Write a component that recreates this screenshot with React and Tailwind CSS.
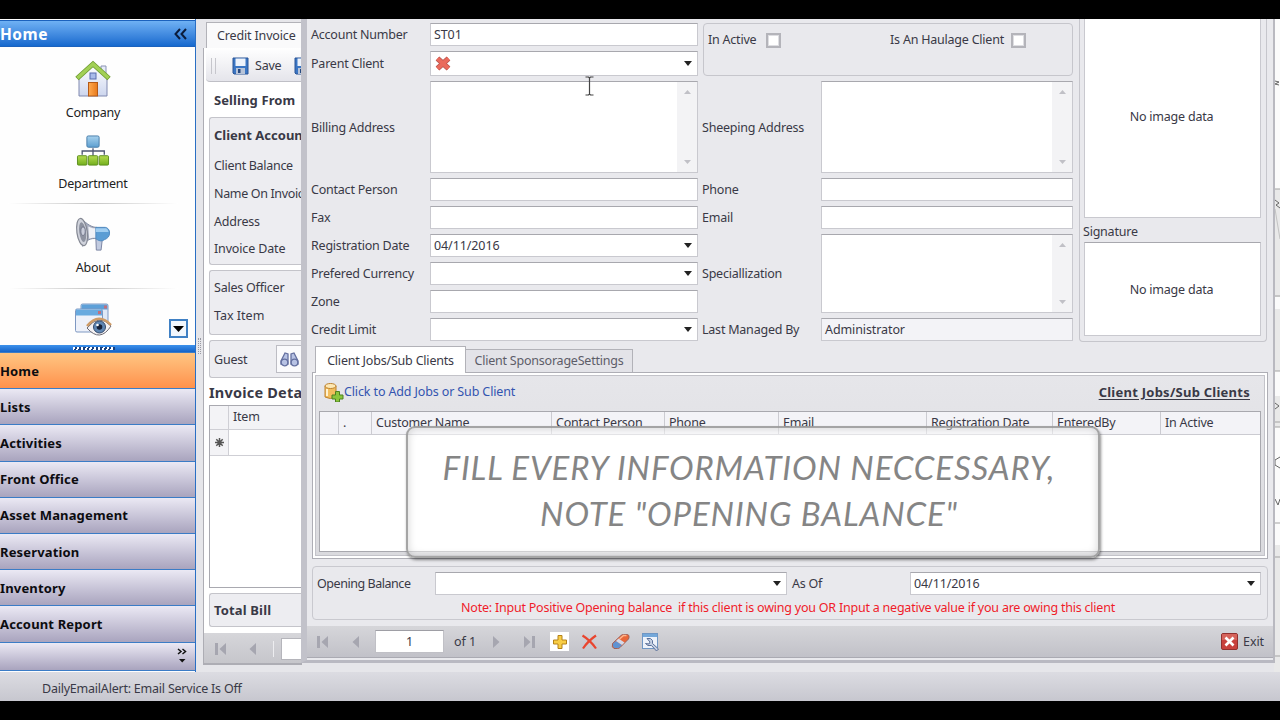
import clsx from 'clsx';

const shortcuts = ['Company', 'Department', 'About'];
const groups = ['Home', 'Lists', 'Activities', 'Front Office', 'Asset Management', 'Reservation', 'Inventory', 'Account Report'];

const columns = [
  { label: '', width: 'w-[19px]' },
  { label: '.', width: 'w-[33px]' },
  { label: 'Customer Name', width: 'w-[180px]' },
  { label: 'Contact Person', width: 'w-[113px]' },
  { label: 'Phone', width: 'w-[114px]' },
  { label: 'Email', width: 'w-[148px]' },
  { label: 'Registration Date', width: 'w-[126px]' },
  { label: 'EnteredBy', width: 'w-[108px]' },
  { label: 'In Active', width: 'flex-1' },
];

function HouseIcon() {
  return (
    <svg width="38" height="38" viewBox="0 0 38 38">
      <defs>
        <linearGradient id="door" x1="0" y1="0" x2="1" y2="0">
          <stop offset="0" stopColor="#ffab52" />
          <stop offset="1" stopColor="#e87a1c" />
        </linearGradient>
        <linearGradient id="wall" x1="0" y1="0" x2="0" y2="1">
          <stop offset="0" stopColor="#ffffff" />
          <stop offset="1" stopColor="#cdd6ee" />
        </linearGradient>
      </defs>
      <path d="M27 6h5v11l-5-4z" fill="#e6ebf8" stroke="#8a93b4" />
      <path d="M5 18 19 5l14 13v18H5z" fill="url(#wall)" stroke="#8089b0" />
      <rect x="14.500" y="22.500" width="9" height="13.500" fill="url(#door)" stroke="#b35a18" />
      <rect x="16" y="13" width="6" height="6" fill="#a9bbea" stroke="#5a6cae" />
      <path d="M3 18.500 19 4l16 14.500" fill="none" stroke="#6f9c33" strokeWidth="5" />
      <path d="M3.500 18 19 4l15.500 14" fill="none" stroke="#a2d055" strokeWidth="3.300" />
    </svg>
  );
}

function OrgIcon() {
  return (
    <svg width="36" height="34" viewBox="0 0 36 34">
      <defs>
        <linearGradient id="blueBox" x1="0" y1="0" x2="0" y2="1">
          <stop offset="0" stopColor="#a8d2ee" />
          <stop offset="1" stopColor="#5d9fd0" />
        </linearGradient>
        <linearGradient id="greenBox" x1="0" y1="0" x2="0" y2="1">
          <stop offset="0" stopColor="#b5dc50" />
          <stop offset="1" stopColor="#72ae1c" />
        </linearGradient>
      </defs>
      <path d="M18 14v8M6.500 21v-4h23.500v4" fill="none" stroke="#4d5572" strokeWidth="1.400" />
      <rect x="11.500" y="1" width="13" height="12" rx="1.500" fill="url(#blueBox)" stroke="#447ba8" />
      <rect x="1.500" y="22" width="10" height="10" rx="1" fill="url(#greenBox)" stroke="#5a8c1c" />
      <rect x="13" y="22" width="10" height="10" rx="1" fill="url(#greenBox)" stroke="#5a8c1c" />
      <rect x="24.500" y="22" width="10" height="10" rx="1" fill="url(#greenBox)" stroke="#5a8c1c" />
    </svg>
  );
}

function MegaphoneIcon() {
  return (
    <svg width="38" height="38" viewBox="0 0 38 38">
      <path d="M22 23h7l-1.500 13h-5z" fill="#c2cbe0" stroke="#7680a0" />
      <path d="M7 3c6 6 11 9 16 9v12c-6-1-11 1-15 8z" fill="#a9afc0" stroke="#8088a0" />
      <path d="M14 11c4 2 6 2 9 2v10c-3 0-6 0-8 1z" fill="#eff1f6" />
      <path d="M22 12h10q4.500 1 4.500 6T31 25q-4 3-9-1z" fill="#5b9dd4" stroke="#5289bd" />
      <path d="M22 13h11q2 1 2.500 4H22z" fill="#a0cdf0" />
      <ellipse cx="7.500" cy="17" rx="5.500" ry="14.500" fill="#d0d3dc" stroke="#858994" strokeWidth="1.300" transform="rotate(-8 7.500 17)" />
      <ellipse cx="8" cy="17" rx="3.500" ry="10.500" fill="#8d92a0" transform="rotate(-8 8 17)" />
      <ellipse cx="8.500" cy="16" rx="2.300" ry="4.500" fill="#c9cdda" stroke="#70758a" />
    </svg>
  );
}

function WindowEyeIcon() {
  return (
    <svg width="38" height="34" viewBox="0 0 38 34">
      <rect x="7" y="1" width="27" height="24" rx="1.500" fill="#dfe8f6" stroke="#7e98c2" />
      <path d="M7.500 1.500h26v5h-26z" fill="#5da0d8" />
      <rect x="1.500" y="6" width="27" height="23" rx="1.500" fill="#edf1fa" stroke="#7e98c2" />
      <path d="M2 6.500h26v6H2z" fill="#68aadf" />
      <path d="M30 2.500h3v3h-3zM24 8h3v3h-3z" fill="#c2707c" />
      <path d="M13 25q12-15 24-2-11 17-24 2z" fill="#f4f2f4" stroke="#6b6871" />
      <path d="M13 23q12-14 24-1" fill="none" stroke="#cf9c67" strokeWidth="2.500" />
      <circle cx="25.500" cy="24" r="6" fill="#5f86b2" stroke="#33496b" />
      <circle cx="25.500" cy="24" r="2.800" fill="#152038" />
      <circle cx="23.500" cy="22" r="1.300" fill="#fff" />
    </svg>
  );
}

const shortcutIcons = { Company: HouseIcon, Department: OrgIcon, About: MegaphoneIcon };

function SaveIcon() {
  return (
    <svg width="17" height="18" viewBox="0 0 17 18" className="shrink-0">
      <path d="M1 1h15v16H2l-1-1z" fill="#3b76c4" stroke="#2a5596" />
      <rect x="3.500" y="1.500" width="10" height="7.500" fill="#eef3fb" />
      <rect x="4" y="11" width="9" height="6" fill="#b8c4d8" />
      <rect x="6" y="12" width="2.500" height="4" fill="#27497f" />
    </svg>
  );
}

function Caret() {
  return (
    <svg width="8" height="5" viewBox="0 0 8 5" className="shrink-0">
      <path d="M0 0h8L4 5z" fill="#222" />
    </svg>
  );
}

function NavArrow({ bar, flip }) {
  return (
    <svg width="14" height="14" viewBox="0 0 14 14" className={clsx('shrink-0 text-[#a6a6b0]', flip && 'rotate-180')}>
      {bar && <path d="M1 1h3v12H1z" fill="currentColor" />}
      <path d="M12 1v12L5.500 7z" fill="currentColor" />
    </svg>
  );
}

function Field({ value, caret, readOnly, children, className = 'h-[23px]' }) {
  return (
    <div
      className={clsx(
        'flex flex-1 items-center justify-between border border-[#c9c9cf] border-t-[#a8a8ae] pr-[5px] pl-[3px]',
        readOnly ? 'bg-[#f3f3f7]' : 'bg-white',
        className,
      )}
    >
      <span className="pt-px tracking-[-0.1px] whitespace-pre">{value}</span>
      {children}
      {caret && <Caret />}
    </div>
  );
}

function Memo({ className }) {
  return (
    <div className={clsx('flex flex-1 justify-end border border-[#c9c9cf] border-t-[#a8a8ae] bg-white', className)}>
      <div className="flex w-5 flex-col items-center justify-between bg-[#f3f3f5] py-2">
        <svg width="7" height="4" viewBox="0 0 7 4"><path d="M0 4h7L3.500 0z" fill="#c0c0c6" /></svg>
        <svg width="7" height="4" viewBox="0 0 7 4"><path d="M0 0h7L3.500 4z" fill="#c0c0c6" /></svg>
      </div>
    </div>
  );
}

function Row({ label, children }) {
  return (
    <div className="flex items-center">
      <div className="w-[119px] shrink-0 pt-px whitespace-nowrap">{label}</div>
      {children}
    </div>
  );
}

function Check({ label, className }) {
  return (
    <div className={clsx('flex items-center whitespace-nowrap', className)}>
      {label}
      <span className="h-[15px] w-[15px] border-2 border-[#b4b4ba] bg-white shadow-[inset_0_0_0_1px_#dedee2]" />
    </div>
  );
}

function Sidebar() {
  return (
    <aside className="flex w-[196px] shrink-0 flex-col border-r border-[#2a6fc4] bg-[#fefefe] pt-px">
      <div className="flex h-[27px] items-center justify-between border-y border-[#1c62bd] bg-gradient-to-b from-[#6fb1f4] to-[#1569ce] pr-2 text-[15.5px] font-bold tracking-[0.5px] text-white">
        <span>Home</span>
        <svg width="13" height="12" viewBox="0 0 13 12" fill="none" stroke="#0b1c3c" strokeWidth="2">
          <path d="M6 1 1.500 6 6 11M12 1 7.500 6 12 11" />
        </svg>
      </div>

      <div className="flex h-[298px] flex-col items-center overflow-hidden pr-[9px] text-[#222]">
        {shortcuts.map((name) => {
          const Icon = shortcutIcons[name];
          return (
            <div
              key={name}
              className={clsx(
                'flex w-full flex-col items-center',
                name === 'Company' && 'h-[86px] gap-[6px] pt-[13px]',
                name === 'Department' && 'h-[71px] gap-[8px] pt-[2px]',
                name === 'About' && 'h-[85px] gap-[7px] pt-[12px]',
              )}
            >
              <Icon />
              <span className="leading-[18px]">{name}</span>
              {name === 'Department' && <div className="mt-[2px] h-px w-[170px] shrink-0 bg-gradient-to-r from-white via-[#c6c6c6] to-white" />}
              {name === 'About' && <div className="mt-[4px] h-px w-[170px] shrink-0 bg-gradient-to-r from-white via-[#c6c6c6] to-white" />}
            </div>
          );
        })}
        <div className="flex w-full justify-end pt-[14px]">
          <WindowEyeIcon />
          <div className="mt-[16px] -mr-[2px] ml-[57px] flex h-[19px] w-[19px] items-center justify-center border-2 border-[#3f80c4] bg-[#f2f7fd]">
            <svg width="11" height="6" viewBox="0 0 11 6"><path d="M0 0h11L5.500 6z" fill="#000" /></svg>
          </div>
        </div>
      </div>

      <div className="flex h-[7px] shrink-0 items-center justify-center bg-gradient-to-b from-[#3d92ec] to-[#1463c8] pr-[8px]">
        <div className="h-[3px] w-[42px] bg-[repeating-linear-gradient(110deg,#fff_0_2px,#173f7d_2px_4px)]" />
      </div>

      <nav>
        {groups.map((name) => (
          <div
            key={name}
            className={clsx(
              'flex h-[36.2px] items-center border-t border-[#3b7cc6] bg-gradient-to-b text-[13px] font-bold tracking-[0.15px] text-[#0c0c10]',
              name === 'Home' ? 'from-[#ffc582] to-[#ff914b]' : 'from-[#ebe9f4] to-[#a9a4be]',
            )}
          >
            {name}
          </div>
        ))}
      </nav>
      <div className="flex h-[29.4px] justify-end border-y border-[#3b7cc6] bg-gradient-to-b from-[#ebe9f4] to-[#a9a4be] pt-[5px] pr-2">
        <svg width="10" height="15" viewBox="0 0 10 15" fill="none" stroke="#111" strokeWidth="1.500">
          <path d="m1 1 3 2.500L1 6M5.500 1l3 2.500-3 2.500" />
          <path d="M2 11h6.500L5.200 14.500z" fill="#111" stroke="none" />
        </svg>
      </div>
    </aside>
  );
}

function Group({ className, children }) {
  return <div className={clsx('ml-[5px] rounded-l-[3px] border border-r-0 border-[#c4c4ca] bg-[#ededf1] pl-[4px]', className)}>{children}</div>;
}

function InvoiceWindow() {
  return (
    <section className="flex w-[99px] shrink-0 flex-col overflow-hidden whitespace-nowrap">
      <div className="mt-[3px] ml-[3px] flex h-[26px] items-center border border-[#b2b2b8] border-b-0 bg-[#fafafb] pl-[10px] tracking-[-0.15px]">Credit Invoice</div>
      <div className="flex h-[617px] flex-col border-b-2 border-l border-[#adadb4] bg-white">
        <div className="ml-[2px] flex h-[34px] shrink-0 items-center gap-[6px] rounded-l-sm border-b border-[#bfbfc6] bg-gradient-to-b from-white to-[#e5e5eb] pt-[2px] pl-[5px]">
          <div className="mr-[10px] h-4 w-[5px] shrink-0 border-x border-[#c6c6cc]" />
          <SaveIcon />
          <span>Save</span>
          <div className="ml-[7px]"><SaveIcon /></div>
        </div>
        <div className="flex h-[35px] shrink-0 items-center pt-px pl-[10px] text-[13px] font-bold tracking-[0.1px]">Selling From</div>
        <Group className="flex h-[148px] shrink-0 flex-col">
          <div className="mt-[7px] h-[25px] text-[13px] font-bold tracking-[0px]">Client Accoun</div>
          <div className="mt-[6px] h-[28px] tracking-[-0.3px]">Client Balance</div>
          <div className="h-[28px] tracking-[-0.35px]">Name On Invoic</div>
          <div className="h-[27px]">Address</div>
          <div className="tracking-[-0.15px]">Invoice Date</div>
        </Group>
        <Group className="mt-[5px] h-[65px] shrink-0 pt-[7px]">
          <div className="h-[28px]">Sales Officer</div>
          <div className="tracking-[0px]">Tax Item</div>
        </Group>
        <Group className="mt-[5px] flex h-[38px] shrink-0 items-center">
          <span className="w-[62px] shrink-0 pt-px">Guest</span>
          <div className="flex h-7 w-7 shrink-0 items-center border border-[#bdbdc4] bg-[#fafafc] pl-[3px]">
            <svg width="19" height="15" viewBox="0 0 19 15" fill="#b7c2e4" stroke="#6470a0" strokeWidth="1.300">
              <path d="M5 1 1 9v3h7V2zM14 1l4 8v3h-7V2z" />
              <circle cx="4.500" cy="10.500" r="3.300" />
              <circle cx="14.500" cy="10.500" r="3.300" />
            </svg>
          </div>
        </Group>
        <div className="ml-[5px] flex h-[27px] shrink-0 items-center text-[14.5px] font-bold tracking-[0.2px]">Invoice Deta</div>
        <div className="ml-[5px] h-[183px] shrink-0 border border-r-0 border-[#a9a9b0] bg-white">
          <div className="flex h-[24px] border-b border-[#cfcfd5] bg-[#f3f3f6]">
            <div className="w-[19px] border-r border-[#cfcfd5]" />
            <div className="pt-px pl-[4px]">Item</div>
          </div>
          <div className="flex h-[26px] border-b border-[#cfcfd5]">
            <div className="flex w-[19px] items-center justify-center border-r border-[#cfcfd5] bg-[#f3f3f6]">
              <svg width="9" height="9" viewBox="0 0 9 9" stroke="#555" strokeWidth="1.500"><path d="M4.500 0v9M0 4.500h9M1.300 1.300l6.400 6.400M7.700 1.300 1.300 7.700" /></svg>
            </div>
          </div>
        </div>
        <Group className="mt-[5px] flex h-[34px] shrink-0 items-center text-[13px] font-bold tracking-[0.15px]">Total Bill</Group>
        <div className="mt-[6px] flex flex-1 items-center bg-gradient-to-b from-[#d6d6da] to-[#c6c6cb] pt-[2px] pl-[10px]">
          <NavArrow bar />
          <div className="ml-[16px]"><NavArrow /></div>
          <div className="ml-[15px] h-4 w-px bg-[#ededf0]" />
          <div className="ml-[7px] h-[22px] flex-1 border border-r-0 border-[#b5b5bb] bg-white" />
        </div>
      </div>
    </section>
  );
}

function ClientForm() {
  return (
    <div className="flex h-[323px] shrink-0 pt-[4px] pl-[4px]">
      <div className="flex w-[387px] flex-col gap-[5px]">
        <Row label="Account Number"><Field value="ST01" /></Row>
        <Row label="Parent Client">
          <Field caret className="h-[25px]">
            <svg width="16" height="15" viewBox="0 0 16 15" className="mr-auto ml-px">
              <path d="M2.500 2.500 13.500 12.500M13.500 2.500 2.500 12.500" stroke="#b5544e" strokeWidth="5.500" />
              <path d="M2.500 2.500 13.500 12.500M13.500 2.500 2.500 12.500" stroke="#ea6a5c" strokeWidth="4" />
            </svg>
          </Field>
        </Row>
        <Row label="Billing Address"><Memo className="h-[92px]" /></Row>
        <Row label="Contact Person"><Field /></Row>
        <Row label="Fax"><Field /></Row>
        <Row label="Registration Date"><Field value="04/11/2016" caret /></Row>
        <Row label="Prefered Currency"><Field caret /></Row>
        <Row label="Zone"><Field /></Row>
        <Row label="Credit Limit"><Field caret /></Row>
      </div>

      <div className="ml-[4px] flex w-[371px] flex-col gap-[5px]">
        <div className="ml-px flex h-[53px] justify-between rounded-sm border border-[#c6c6cc] pr-[46px] pb-[19px] pl-[4px]">
          <Check label="In Active" className="gap-[10px]" />
          <Check label="Is An Haulage Client" className="gap-[7px]" />
        </div>
        <Row label="Sheeping Address"><Memo className="h-[92px]" /></Row>
        <Row label="Phone"><Field /></Row>
        <Row label="Email"><Field /></Row>
        <Row label="Speciallization"><Memo className="h-[79px]" /></Row>
        <Row label="Last Managed By"><Field value="Administrator" readOnly /></Row>
      </div>

      <div className="-mt-[4px] ml-[6px] flex w-[188px] flex-col rounded-b-sm border border-t-0 border-[#c6c6cc] pr-[5px] pl-[4px]">
        <div className="flex h-[199px] items-center justify-center border border-t-0 border-[#c9c9cf] bg-white pr-[2px] pb-[3px]">No image data</div>
        <div className="-ml-px flex h-[24px] items-center pt-[3px]">Signature</div>
        <div className="flex h-[94px] items-center justify-center border border-[#c9c9cf] border-t-[#a8a8ae] bg-white pt-px pr-[2px]">No image data</div>
      </div>
    </div>
  );
}

function JobsTab() {
  return (
    <div className="flex h-[217px] shrink-0 flex-col px-[5px] pt-[4px]">
      <div className="flex h-[26px] shrink-0 items-end pl-[3px]">
        <div className="relative z-10 -mb-px flex h-[27px] w-[151px] items-center justify-center border border-b-0 border-[#b2b2b8] bg-white pt-px tracking-[-0.2px] whitespace-nowrap">
          Client Jobs/Sub Clients
        </div>
        <div className="flex h-[23px] w-[167px] items-center justify-center border border-b-0 border-l-0 border-[#b2b2b8] bg-[#e3e3e8] whitespace-nowrap text-[#5d5d68]">
          Client SponsorageSettings
        </div>
      </div>
      <div className="flex flex-1 flex-col border border-[#aeaeb5] bg-white p-[2px]">
        <div className="flex flex-1 flex-col border border-[#c3c3c9] bg-gradient-to-b from-[#e6e6ea] to-[#dadade] px-[3px] pb-[3px]">
          <div className="flex h-[35px] shrink-0 items-center justify-between pr-[11px] pb-[4px] pl-[4px]">
            <div className="flex items-center text-[#3354b0]">
              <svg width="21" height="20" viewBox="0 0 21 20">
                <path d="M2 4v11q5 3 11 0V4z" fill="#f2bd5d" stroke="#bd8230" />
                <ellipse cx="7.500" cy="4" rx="5.500" ry="2.500" fill="#fde8b4" stroke="#bd8230" />
                <path d="M4 7v7" stroke="#fff2cf" strokeWidth="2" />
                <path d="M12.500 9.500h4v3.500H20v4h-3.500v3h-4v-3H9v-4h3.500z" fill="#8ac53c" stroke="#4d8121" />
              </svg>
              <span className="tracking-[-0.13px]">Click to Add Jobs or Sub Client</span>
            </div>
            <span className="text-[13px] font-bold tracking-[0.25px] underline underline-offset-2">Client Jobs/Sub Clients</span>
          </div>
          <div className="flex-1 border border-[#a8a8ae] bg-white">
            <div className="flex h-[23px] items-center border-b border-[#cbcbd1] bg-[#f3f3f7]">
              {columns.map((col) => (
                <div key={col.label} className={clsx('flex h-full shrink-0 items-center border-r border-[#cbcbd1] pb-px pl-[4px] whitespace-nowrap last:border-r-0', col.width)}>
                  {col.label}
                </div>
              ))}
            </div>
          </div>
        </div>
      </div>
    </div>
  );
}

function OpeningBalance() {
  return (
    <div className="mx-[5px] mt-[7px] h-[54px] shrink-0 rounded-sm border border-[#c9c9cf] pt-[5px] pr-[6px] pl-[4px]">
      <div className="flex items-center">
        <span className="w-[118px] tracking-[-0.45px] whitespace-nowrap">Opening Balance</span>
        <div className="flex w-[352px]"><Field caret className="h-[23px]" /></div>
        <span className="w-[123px] pl-[5px]">As Of</span>
        <Field value="04/11/2016" caret />
      </div>
      <div className="mt-[4px] pr-[2px] text-center leading-[18px] tracking-[-0.22px] whitespace-pre text-[#f01c2a]">
        {'Note: Input Positive Opening balance  if this client is owing you OR Input a negative value if you are owing this client'}
      </div>
    </div>
  );
}

function DialogToolbar() {
  return (
    <div className="mt-[6px] flex h-[32px] shrink-0 items-center border-b border-[#aaaab2] bg-gradient-to-b from-[#d6d6da] to-[#c1c1c8] pr-[9px] pl-[9px]">
      <NavArrow bar />
      <div className="ml-[17px]"><NavArrow /></div>
      <div className="ml-[14px] flex h-[23px] w-[69px] items-center justify-center border border-[#c0c0c6] border-t-[#9e9ea5] bg-white pt-px">1</div>
      <span className="ml-[10px] w-[37px] pt-px tracking-[0px]">of 1</span>
      <NavArrow flip />
      <div className="ml-[17px]"><NavArrow bar flip /></div>
      <div className="ml-[14px] flex h-[19px] w-[19px] items-center justify-center bg-white">
        <svg width="16" height="16" viewBox="0 0 16 16"><path d="M6 1.500h4V6h4.500v4H10v4.500H6V10H1.500V6H6z" fill="#f8cd45" stroke="#b58218" /></svg>
      </div>
      <svg width="17" height="16" viewBox="0 0 17 16" className="ml-[12px]" fill="none" stroke="#e9452f" strokeWidth="2.200">
        <path d="M1.500 1.500q8 5 13.500 13M15 1.500Q7 7 2 14.500" />
      </svg>
      <svg width="19" height="17" viewBox="0 0 19 17" className="ml-[13px]">
        <path d="M1.500 10.500 10 2.500q1-1 2.500-1h4q2 .5 1.500 3l-.5 1.500L9 14.500q-1 1-2.500 1H3Q.5 14.500 1.500 10.500z" fill="#e8673a" stroke="#a06058" />
        <path d="M2 10.500 5 8l6 4-2.500 2.500q-1 .5-2.500.5H3.500Q1.500 14 2 10.500z" fill="#5f92d2" />
        <path d="M5 8 7.500 5.500l6 4L11 12z" fill="#d3daea" />
        <path d="m8.500 6 4-3.500h3" stroke="#ffb58c" strokeWidth="1.500" fill="none" />
      </svg>
      <svg width="19" height="20" viewBox="0 0 19 20" className="ml-[11px]">
        <rect x="1.500" y="1.500" width="15" height="15" fill="#edf2fa" stroke="#6f96c4" />
        <path d="M2 2h14v3H2z" fill="#74a8da" />
        <path d="M6 6.500q4-1 5.500 2v3l6 5.500-2 2-5-5.500q-4 1-6-2l3.500.500 1-2z" fill="#c4cfe2" stroke="#5b7099" />
      </svg>
      <div className="ml-auto flex items-center gap-[5px]">
        <svg width="17" height="17" viewBox="0 0 17 17">
          <rect x=".5" y=".5" width="16" height="16" rx="1.500" fill="#c8413d" stroke="#91302f" />
          <path d="M1 1h15v6H1z" fill="#e07a70" opacity=".6" />
          <path d="m4.500 4.500 8 8M12.500 4.500l-8 8" stroke="#fff" strokeWidth="2.600" />
        </svg>
        <span className="tracking-[-0.1px]">Exit</span>
      </div>
    </div>
  );
}

function ClientDialog() {
  return (
    <div className="absolute top-0 left-[301px] flex h-[644px] w-[974px] flex-col border-r-[2px] border-b-[3px] border-l-[6px] border-r-[#b9b9c0] border-b-[#b9b9c2] border-l-[#c2c2ca] bg-[#e9e9ed]">
      <ClientForm />
      <JobsTab />
      <OpeningBalance />
      <DialogToolbar />
    </div>
  );
}

function Callout() {
  return (
    <div className="absolute top-[407px] left-[406px] flex h-[132px] w-[694px] items-center justify-center rounded-[9px] border-2 border-[#8f8f8f]/80 bg-white/50 pr-[8px] pb-[4px] text-center font-['Lato'] text-[33px] leading-[46px] tracking-[0.87px] whitespace-pre text-[#858585] italic shadow-[1px_2px_3px_rgba(0,0,0,0.45),inset_0_0_8px_rgba(0,0,0,0.18)]">
      {'FILL EVERY INFORMATION NECCESSARY,\nNOTE "OPENING BALANCE"'}
    </div>
  );
}

// Right edge of the windows lying behind the client dialog.
function BackgroundEdge() {
  return (
    <svg width="6" height="653" viewBox="0 0 6 653" className="absolute top-0 right-0">
      <path d="M0 0h6v653H0z" fill="#e9e9e9" />
      <path d="M0 0h6v170H0zM0 278h6v12H0zM0 352h6v25H0zM0 408h6v118H0z" fill="#fbfbfb" />
      <path d="M0 170h6M0 277h6M0 352h6M0 403h6M0 408h6M0 504h6M0 538h6M0 637h6" stroke="#a3a3a3" />
      <path d="m1 62 4 1-4 2 4 1M1 181l4 3-3 2 4 3M1 384l4 3-4 3M6 438l-5 3v5l5 3M1 480l3 6 2-6" stroke="#666" fill="none" />
      <path d="m1 190 5 30" stroke="#c2c2c2" />
    </svg>
  );
}

export default function App() {
  return (
    <div className="h-[720px] w-[1280px] overflow-hidden bg-black pt-[19px] font-['Noto_Sans',sans-serif] text-[12.5px] leading-[20px] tracking-[-0.22px] text-[#393946]">
      <div className="relative h-[682px] overflow-hidden bg-[#e6e6ea]">
        <div className="flex h-[653px]">
          <Sidebar />
          <div className="flex w-[7px] items-center justify-center">
            <div className="h-4 w-[3px] border-x border-dotted border-[#9999a2]" />
          </div>
          <InvoiceWindow />
        </div>
        <BackgroundEdge />
        <ClientDialog />
        <Callout />
        <svg width="9" height="20" viewBox="0 0 9 20" className="absolute top-[57px] left-[585px]" fill="none" stroke="#444" strokeWidth="1.200">
          <path d="M.5 1h3l1 1 1-1h3M4.500 2v16M.5 19h3l1-1 1 1h3" />
        </svg>
        <footer className="flex h-[29px] items-center bg-gradient-to-b from-[#dcdce2] to-[#c7c7cf] pt-[4px] pl-[42px]">
          DailyEmailAlert: Email Service Is Off
        </footer>
      </div>
    </div>
  );
}
